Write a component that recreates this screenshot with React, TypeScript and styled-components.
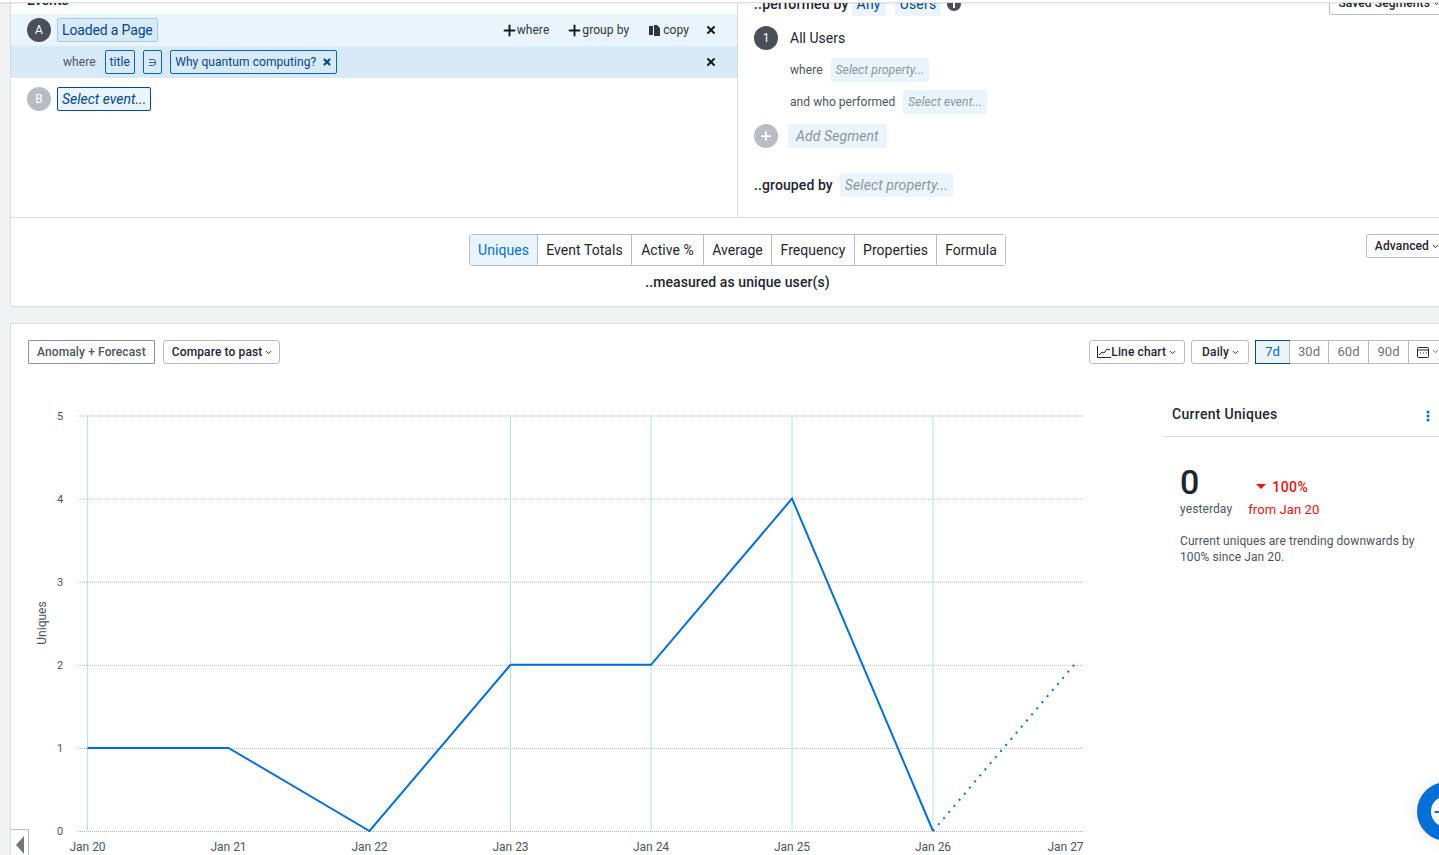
import React from 'react';
import styled, { createGlobalStyle } from 'styled-components';
import { ChevronDown, Plus, X } from 'lucide-react';

const Global = createGlobalStyle`
  html, body { margin: 0; padding: 0; background: #f1f2f4; }
  * { box-sizing: border-box; }
  body { font-family: Roboto, "Noto Sans", Arial, sans-serif; color: #1f2530; }
`;

const Page = styled.div`
  position: relative;
  width: 1439px;
  height: 855px;
  overflow: hidden;
  background: #f1f2f4;
`;
const TopEdge = styled.div`
  position: absolute;
  top: 0; left: 0; right: 0;
  height: 3px;
  background: #fff;
  border-bottom: 1px solid #dfe0e3;
  box-shadow: 0 1px 2px rgba(0,0,0,.08);
  z-index: 3;
`;
const Card = styled.section`
  width: 1455px;
  margin-left: 10px;
  background: #fff;
  border: 1px solid #d9dbdf;
`;
const QueryCard = styled(Card)`
  margin-top: -30px;
  height: 337px;
`;
const ChartCard = styled(Card)`
  position: relative;
  margin-top: 16px;
  height: 560px;
`;
const Builder = styled.div`
  display: grid;
  grid-template-columns: 727px 1fr;
  height: 247px;
  border-bottom: 1px solid #d9dbdf;
`;
const EventsCol = styled.div`
  border-right: 1px solid #d9dbdf;
  padding-top: 19px;
`;
const SegCol = styled.div`
  position: relative;
  padding: 23px 0 0 16px;
`;
const Heading = styled.div`
  font-size: 14px;
  line-height: 20px;
  font-weight: 500;
  padding-left: 16px;
  margin-bottom: 4px;
`;
const EventRow = styled.div<{ $bg?: string; $indent?: number }>`
  display: flex;
  align-items: center;
  height: 32px;
  padding: 0 20px 0 ${p => p.$indent ?? 16}px;
  background: ${p => p.$bg ?? 'transparent'};
`;
const SpacedRow = styled(EventRow)`
  margin-top: 5px;
`;
const Circle = styled.span<{ $bg: string }>`
  width: 24px;
  height: 24px;
  flex: none;
  border-radius: 50%;
  background: ${p => p.$bg};
  color: #fff;
  font-size: 12px;
  display: flex;
  align-items: center;
  justify-content: center;
`;
const Filter = styled.span<{ $ml?: number; $size?: number }>`
  display: inline-flex;
  align-items: center;
  height: 24px;
  margin-left: ${p => p.$ml ?? 6}px;
  padding: 0 4px;
  border: 1px solid #0067c5;
  border-radius: 2px;
  color: #00488f;
  font-size: ${p => p.$size ?? 12}px;
  letter-spacing: .08px;
  white-space: nowrap;
`;
const SoftFilter = styled(Filter)`
  border-color: #9ccbf3;
  background: #d8e9f8;
  letter-spacing: -.15px;
`;
const DarkFilter = styled(Filter)`
  border-color: #00488f;
  background: #e9f4fd;
  font-style: italic;
  letter-spacing: 0;
`;
const Muted = styled.span`
  font-size: 12px;
  letter-spacing: .06px;
  color: #4d5462;
`;
const Actions = styled.div`
  margin-left: auto;
  display: flex;
  align-items: center;
  gap: 20px;
`;
const Action = styled.span`
  display: inline-flex;
  align-items: center;
  font-size: 12px;
  letter-spacing: .08px;
  color: #30353f;
  gap: 2px;
`;
const CopyAction = styled(Action)`
  gap: 3px;
`;
const Close = styled(X)`
  width: 12px;
  height: 12px;
  stroke-width: 4;
  color: #14181f;
`;
const RowClose = styled(Close)`
  margin-left: -4px;
`;
const CloseEnd = styled(Close)`
  margin-left: auto;
`;
const RemoveValue = styled(X)`
  width: 10px;
  height: 10px;
  stroke-width: 5;
  margin-left: 6px;
  color: #00488f;
`;
const PlusIcon = styled(Plus)`
  width: 17px;
  height: 17px;
  stroke-width: 2.7;
  margin: 0 -3px;
  color: #14181f;
`;
const Chev = styled(ChevronDown)`
  width: 9px;
  height: 9px;
  stroke-width: 2.5;
  margin-left: 2px;
  flex: none;
`;
const PerformedRow = styled.div`
  display: flex;
  align-items: center;
  height: 20px;
  font-size: 14px;
  font-weight: 500;
  letter-spacing: .2px;
`;
const BlueTag = styled.span<{ $ml: number }>`
  display: inline-flex;
  align-items: center;
  height: 24px;
  padding: 0 5px;
  margin-left: ${p => p.$ml}px;
  background: #e9f4fd;
  color: #00488f;
  font-size: 14px;
  font-weight: 400;
  border-radius: 2px;
`;
const InfoDot = styled.svg`
  width: 14px;
  height: 14px;
  margin-left: 6px;
`;
const GhostBtn = styled.button`
  display: inline-flex;
  align-items: center;
  height: 24px;
  padding: 0 8px;
  border: 1px solid #b9bcc5;
  border-radius: 3px;
  background: #fff;
  color: #1f2530;
  font: 500 12px Roboto, sans-serif;
  letter-spacing: .12px;
  white-space: nowrap;
`;
const SavedBtn = styled(GhostBtn)`
  position: absolute;
  top: 20px;
  right: 14px;
`;
const SegRow = styled.div<{ $mt: number; $ml?: number }>`
  display: flex;
  align-items: center;
  height: 24px;
  margin-top: ${p => p.$mt}px;
  margin-left: ${p => p.$ml ?? 0}px;
`;
const SegName = styled.span`
  font-size: 14px;
  margin-left: 12px;
`;
const Placeholder = styled.span<{ $ml: number; $size?: number; $px?: number }>`
  display: inline-flex;
  align-items: center;
  height: 24px;
  padding: 0 ${p => p.$px ?? 5}px;
  margin-left: ${p => p.$ml}px;
  background: #e9f4fd;
  color: #8d93a0;
  font-size: ${p => p.$size ?? 12}px;
  letter-spacing: .1px;
  font-style: italic;
  border-radius: 2px;
`;
const GroupLabel = styled.span`
  font-size: 14px;
  font-weight: 500;
  letter-spacing: .1px;
`;
const PlusCircle = styled(Circle)`
  svg { width: 14px; height: 14px; stroke-width: 3; }
`;
const Measure = styled.div`
  position: relative;
  padding-top: 16px;
  display: flex;
  flex-direction: column;
  align-items: center;
`;
const Tabs = styled.div`
  display: flex;
  height: 32px;
  border: 1px solid #b9bcc5;
  border-radius: 3px;
`;
const Tab = styled.span<{ $active?: boolean; $w: number }>`
  display: flex;
  align-items: center;
  justify-content: center;
  width: ${p => p.$w}px;
  font-size: 14px;
  letter-spacing: .05px;
  color: ${p => (p.$active ? '#0070d8' : '#1f2530')};
  background: ${p => (p.$active ? '#e9f4fd' : '#fff')};
  & + & { border-left: 1px solid #b9bcc5; }
`;
const MeasureNote = styled.div`
  margin-top: 6px;
  font-size: 14px;
  line-height: 20px;
  font-weight: 500;
  letter-spacing: .08px;
`;
const AdvancedBtn = styled(GhostBtn)`
  position: absolute;
  top: 16px;
  right: 15px;
`;
const Toolbar = styled.div`
  display: flex;
  align-items: center;
  height: 24px;
  margin: 16px 15px 0 17px;
`;
const SquareBtn = styled(GhostBtn)`
  border-color: #8d93a0;
  border-radius: 1px;
  color: #4d5462;
  margin-right: 8px;
`;
const CompareBtn = styled(GhostBtn)`
  padding-right: 6px;
`;
const RightTools = styled.div`
  margin-left: auto;
  display: flex;
  align-items: center;
`;
const LineBtn = styled(GhostBtn)`
  padding: 0 7px;
  margin-right: 6px;
`;
const DailyBtn = styled(GhostBtn)`
  padding: 0 8px 0 10px;
  margin-right: 6px;
`;
const Range = styled.div`
  display: flex;
  height: 24px;
  border: 1px solid #b9bcc5;
  border-radius: 2px;
`;
const RangeItem = styled.span<{ $active?: boolean; $w: number }>`
  display: flex;
  align-items: center;
  justify-content: center;
  width: ${p => p.$w}px;
  padding-bottom: 1px;
  font-size: 13px;
  color: ${p => (p.$active ? '#0067c5' : '#6a7080')};
  background: ${p => (p.$active ? '#e9f4fd' : '#fff')};
  outline: ${p => (p.$active ? '1px solid #00488f' : 'none')};
  & + & { border-left: 1px solid #b9bcc5; }
`;
const ChartBody = styled.div`
  display: flex;
  margin-top: 16px;
`;
const ChartSvg = styled.svg`
  display: block;
  flex: none;
`;
const Panel = styled.aside`
  width: 280px;
  margin-left: 23px;
  padding-top: 20px;
`;
const PanelHead = styled.div`
  display: flex;
  align-items: center;
  justify-content: space-between;
  height: 37px;
  padding: 0 14px 8px 8px;
  border-bottom: 1px solid #d9dbdf;
  font-size: 14px;
  font-weight: 500;
  letter-spacing: .3px;
`;
const Kebab = styled.svg`
  width: 4px;
  height: 12px;
  margin-top: 4px;
`;
const Stats = styled.div`
  display: flex;
  padding: 27px 0 0 16px;
`;
const StatCol = styled.div<{ $ml?: number }>`
  margin-left: ${p => p.$ml ?? 0}px;
`;
const BigNum = styled.div`
  font-size: 34px;
  line-height: 36px;
  font-weight: 500;
  color: #1f2530;
`;
const Delta = styled.div`
  display: flex;
  align-items: center;
  height: 36px;
  padding: 9px 0 0 8px;
  color: #f00f0f;
  font-size: 14px;
  letter-spacing: .5px;
  font-weight: 500;
`;
const Down = styled.i`
  width: 0;
  height: 0;
  margin-right: 6px;
  border-left: 5px solid transparent;
  border-right: 5px solid transparent;
  border-top: 5px solid #f00f0f;
`;
const StatNote = styled.div`
  font-size: 12px;
  line-height: 18px;
  letter-spacing: .1px;
  color: #4d5462;
`;
const RedNote = styled(StatNote)`
  font-size: 13px;
  padding-top: 1px;
  color: #f00f0f;
`;
const Desc = styled.p`
  margin: 14px 0 0 16px;
  width: 248px;
  font-size: 12px;
  line-height: 16px;
  letter-spacing: .08px;
  color: #4d5462;
`;
const Pager = styled.div`
  position: absolute;
  left: 0;
  top: 505px;
  width: 18px;
  height: 30px;
  background: #fff;
  border-top: 1px solid #b9bcc5;
  border-right: 1px solid #b9bcc5;
  display: flex;
  align-items: center;
  padding-left: 5px;
  &::before {
    content: '';
    border-top: 9px solid transparent;
    border-bottom: 9px solid transparent;
    border-right: 8px solid #6f7682;
  }
`;
const ChatFab = styled.div`
  position: absolute;
  left: 1417px;
  top: 782px;
  width: 59px;
  height: 59px;
  border-radius: 50%;
  border: 14px solid #0070d8;
  background: #fff;
  box-shadow: 0 0 16px rgba(0,0,0,.10);
  color: #0070d8;
  display: flex;
  align-items: center;
  svg { width: 16px; height: 16px; stroke-width: 3.2; margin-left: 1px; flex: none; }
`;

const xs = [87.5, 228.5, 369.5, 510.5, 651, 792, 933, 1074];
const xLabels = ['Jan 20', 'Jan 21', 'Jan 22', 'Jan 23', 'Jan 24', 'Jan 25', 'Jan 26', 'Jan 27'];
const yLine = (v: number) => 831 - v * 83.1;
const values = [1, 1, 0, 2, 2, 4, 0];
const gridY = [0, 1, 2, 3, 4, 5];
const teal = [87.5, 510.5, 651, 792, 933];
const tabs: [string, number][] = [['Event Totals', 94], ['Active %', 72], ['Average', 68], ['Frequency', 83], ['Properties', 82], ['Formula', 69]];

const Chart = () => (
  <ChartSvg width={1130} height={475} viewBox="11 380 1130 475">
    {gridY.map(v => (
      <g key={v}>
        <line x1={78} x2={1083} y1={yLine(v) + 0.5} y2={yLine(v) + 0.5} stroke="#a9b6bf" strokeWidth={1} strokeDasharray="1 1" />
        <text x={60} y={yLine(v) + 4} fontSize={11} fill="#4d5462" textAnchor="middle" fontFamily="Roboto">{v}</text>
      </g>
    ))}
    {teal.map(x => (
      <line key={x} x1={x} x2={x} y1={415} y2={831} stroke="#b5e4e4" strokeWidth={1} />
    ))}
    <polyline
      points={values.map((v, i) => `${xs[i]},${yLine(v)}`).join(' ')}
      fill="none"
      stroke="#0070d8"
      strokeWidth={2}
    />
    <line x1={933} y1={831} x2={1074} y2={665} stroke="#0070d8" strokeWidth={2} strokeDasharray="2 6" />
    {xLabels.map((l, i) => (
      <text key={l} x={i === 7 ? 1065.5 : xs[i]} y={851} fontSize={12} fill="#4d5462" textAnchor="middle" fontFamily="Roboto">{l}</text>
    ))}
    <text transform="translate(46 623) rotate(-90)" fontSize={12} fill="#4d5462" textAnchor="middle" fontFamily="Roboto">Uniques</text>
  </ChartSvg>
);

export default function App() {
  return (
    <Page>
      <Global />
      <TopEdge />
      <QueryCard>
        <Builder>
          <EventsCol>
            <Heading>Events</Heading>
            <EventRow $bg="#e9f4fd">
              <Circle $bg="#4a4f5a">A</Circle>
              <SoftFilter $size={14}>Loaded a Page</SoftFilter>
              <Actions>
                <Action><PlusIcon />where</Action>
                <Action><PlusIcon />group by</Action>
                <CopyAction>
                  <svg width="11" height="11" viewBox="0 0 11 11"><path d="M0 1h4v9H0zM5 0h3l3 3v8H5z" fill="#30353f" /></svg>
                  copy
                </CopyAction>
                <RowClose />
              </Actions>
            </EventRow>
            <EventRow $bg="#d8e9f8" $indent={52}>
              <Muted>where</Muted>
              <Filter $ml={9}>title</Filter>
              <Filter $ml={8} $size={10}>∋</Filter>
              <Filter $ml={8}>Why quantum computing?<RemoveValue /></Filter>
              <CloseEnd />
            </EventRow>
            <SpacedRow>
              <Circle $bg="#b9bcc5">B</Circle>
              <DarkFilter $size={14}>Select event...</DarkFilter>
            </SpacedRow>
          </EventsCol>
          <SegCol>
            <PerformedRow>
              ..performed by
              <BlueTag $ml={3}>Any</BlueTag>
              <BlueTag $ml={9}>Users</BlueTag>
              <InfoDot viewBox="0 0 14 14">
                <circle cx="7" cy="7" r="7" fill="#4a4f5a" />
                <rect x="6" y="6" width="2" height="5" fill="#fff" />
                <rect x="6" y="3" width="2" height="2" fill="#fff" />
              </InfoDot>
            </PerformedRow>
            <SavedBtn>Saved Segments<Chev /></SavedBtn>
            <SegRow $mt={12}>
              <Circle $bg="#4a4f5a">1</Circle>
              <SegName>All Users</SegName>
            </SegRow>
            <SegRow $mt={8} $ml={36}>
              <Muted>where</Muted>
              <Placeholder $ml={8}>Select property...</Placeholder>
            </SegRow>
            <SegRow $mt={8} $ml={36}>
              <Muted>and who performed</Muted>
              <Placeholder $ml={8}>Select event...</Placeholder>
            </SegRow>
            <SegRow $mt={10}>
              <PlusCircle $bg="#b9bcc5"><Plus /></PlusCircle>
              <Placeholder $ml={10} $size={14} $px={8}>Add Segment</Placeholder>
            </SegRow>
            <SegRow $mt={25}>
              <GroupLabel>..grouped by</GroupLabel>
              <Placeholder $ml={7} $size={14} $px={5}>Select property...</Placeholder>
            </SegRow>
          </SegCol>
        </Builder>
        <Measure>
          <Tabs>
            <Tab $active $w={67}>Uniques</Tab>
            {tabs.map(([t, w]) => <Tab key={t} $w={w}>{t}</Tab>)}
          </Tabs>
          <MeasureNote>..measured as unique user(s)</MeasureNote>
          <AdvancedBtn>Advanced<Chev /></AdvancedBtn>
        </Measure>
      </QueryCard>
      <ChartCard>
        <Toolbar>
          <SquareBtn>Anomaly + Forecast</SquareBtn>
          <CompareBtn>Compare to past<Chev /></CompareBtn>
          <RightTools>
            <LineBtn>
              <svg width="14" height="12" viewBox="0 0 14 12"><path d="M.5 0v11.5H14" fill="none" stroke="#1f2530" /><path d="M2 9l3-3 2 1 3-4 3 1" fill="none" stroke="#1f2530" /></svg>
              Line chart<Chev />
            </LineBtn>
            <DailyBtn>Daily<Chev /></DailyBtn>
            <Range>
              <RangeItem $active $w={33}>7d</RangeItem>
              <RangeItem $w={39}>30d</RangeItem>
              <RangeItem $w={40}>60d</RangeItem>
              <RangeItem $w={40}>90d</RangeItem>
              <RangeItem $w={40}>
                <svg width="12" height="12" viewBox="0 0 12 12"><rect x=".5" y="1.5" width="11" height="10" rx="1" fill="none" stroke="#1f2530" /><path d="M0 4h12" stroke="#1f2530" /><path d="M3 7h1M6 7h1M9 7h1" stroke="#1f2530" /></svg>
                <Chev />
              </RangeItem>
            </Range>
          </RightTools>
        </Toolbar>
        <ChartBody>
          <Chart />
          <Panel>
            <PanelHead>
              Current Uniques
              <Kebab viewBox="0 0 4 12"><circle cx="2" cy="2" r="1.5" fill="#0070d8" /><circle cx="2" cy="6" r="1.5" fill="#0070d8" /><circle cx="2" cy="10" r="1.5" fill="#0070d8" /></Kebab>
            </PanelHead>
            <Stats>
              <StatCol>
                <BigNum>0</BigNum>
                <StatNote>yesterday</StatNote>
              </StatCol>
              <StatCol $ml={16}>
                <Delta><Down />100%</Delta>
                <RedNote>from Jan 20</RedNote>
              </StatCol>
            </Stats>
            <Desc>Current uniques are trending downwards by 100% since Jan 20.</Desc>
          </Panel>
        </ChartBody>
        <Pager />
      </ChartCard>
      <ChatFab><Plus /></ChatFab>
    </Page>
  );
}
